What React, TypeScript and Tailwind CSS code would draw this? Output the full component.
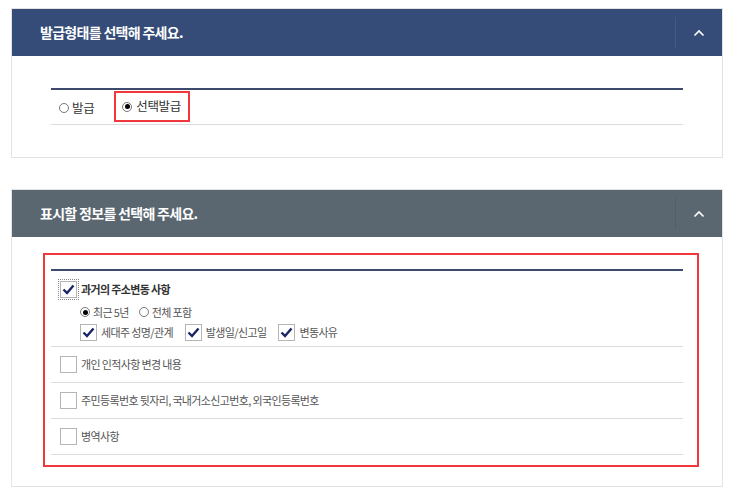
import React from 'react';

const font = { fontFamily: '"Noto Sans CJK KR", "Noto Sans", sans-serif' };

const Chevron: React.FC = () => (
  <svg width="12" height="8" viewBox="0 0 12 8" fill="none">
    <polyline points="1.5,6.5 6,2 10.5,6.5" stroke="white" strokeWidth="1.6" />
  </svg>
);

const Radio: React.FC<{ checked?: boolean }> = ({ checked }) => (
  <span className="w-[10px] h-[10px] rounded-full border border-[#777] bg-white flex items-center justify-center shrink-0">
    {checked && <span className="w-[5px] h-[5px] rounded-full bg-black" />}
  </span>
);

const Checkbox: React.FC<{ checked?: boolean; focused?: boolean }> = ({ checked, focused }) => (
  <span
    className={
      'w-[17px] h-[17px] border border-[#b5b5b5] bg-white flex items-center justify-center shrink-0 ' +
      (focused ? 'outline-1 outline-dotted outline-[#888] outline-offset-1' : '')
    }
  >
    {checked && (
      <svg width="13" height="11" viewBox="0 0 13 11" fill="none">
        <polyline points="1.5,5.5 5,9 11.5,1.5" stroke="#1b2566" strokeWidth="2.4" />
      </svg>
    )}
  </span>
);

const PanelHeader: React.FC<{ title: string; color: string; divider: string }> = ({ title, color, divider }) => (
  <div className={'h-[47px] flex items-center justify-between ' + color}>
    <h2 className="pl-[28px] text-white text-[14px] font-bold tracking-[-0.05em]">{title}</h2>
    <div className="flex items-center h-full">
      <span className={'w-px h-[31px] ' + divider} />
      <button className="w-[46px] h-full flex items-center justify-center">
        <Chevron />
      </button>
    </div>
  </div>
);

const rows = ['개인 인적사항 변경 내용', '주민등록번호 뒷자리, 국내거소신고번호, 외국인등록번호', '병역사항'];

export default function App() {
  return (
    <div className="bg-white min-h-screen pt-[8px] pl-[11px]" style={font}>
      <div className="w-[712px] border border-[#e3e3e3]">
        <PanelHeader title="발급형태를 선택해 주세요." color="bg-[#344c77]" divider="bg-[#45598a]" />
        <div className="px-[39px] pt-[32px] pb-[32px]">
          <div className="border-t-2 border-[#3d4a6c] border-b border-b-[#dcdcdc] h-[37px] flex items-start text-[12.5px] text-[#333] tracking-[-0.03em]">
            <label className="flex items-center gap-[3px] pl-[8px] mt-[9px]">
              <Radio />
              <span>발급</span>
            </label>
            <label className="ml-[20px] mt-[1px] h-[31px] w-[76px] pl-[6px] border-2 border-[#f0383d] flex items-center gap-[4px]">
              <Radio checked />
              <span>선택발급</span>
            </label>
          </div>
        </div>
      </div>

      <div className="w-[712px] border border-[#e3e3e3] mt-[31px]">
        <PanelHeader title="표시할 정보를 선택해 주세요." color="bg-[#5a6670]" divider="bg-[#4e5e72]" />
        <div className="pl-[31px] pr-[23px] pt-[16px] pb-[19px]">
          <div className="border-2 border-[#f0383d] pl-[6px] pr-[14px] pt-[14px] pb-[10px]">
            <div className="border-t-2 border-[#3d4a6c] text-[#555] tracking-[-0.04em]">
              <div className="border-b border-[#dcdcdc] pl-[9px] pt-[10px] pb-[5px]">
                <label className="flex items-center gap-[4px]">
                  <Checkbox checked focused />
                  <span className="text-[11px] font-bold text-[#333]">과거의 주소변동 사항</span>
                </label>
                <div className="pl-[20px] mt-[6px] flex items-center text-[11px]">
                  <label className="flex items-center gap-[3px]">
                    <Radio checked />
                    <span>최근 5년</span>
                  </label>
                  <label className="flex items-center gap-[3px] ml-[10px]">
                    <Radio />
                    <span>전체 포함</span>
                  </label>
                </div>
                <div className="pl-[20px] mt-[3px] flex items-center text-[11px]">
                  <label className="flex items-center gap-[4px]">
                    <Checkbox checked />
                    <span>세대주 성명/관계</span>
                  </label>
                  <label className="flex items-center gap-[4px] ml-[12px]">
                    <Checkbox checked />
                    <span>발생일/신고일</span>
                  </label>
                  <label className="flex items-center gap-[4px] ml-[12px]">
                    <Checkbox checked />
                    <span>변동사유</span>
                  </label>
                </div>
              </div>
              {rows.map((r) => (
                <div key={r} className="border-b border-[#dcdcdc] h-[36px] pl-[9px] flex items-center">
                  <label className="flex items-center gap-[4px] text-[11px]">
                    <Checkbox />
                    <span>{r}</span>
                  </label>
                </div>
              ))}
            </div>
          </div>
        </div>
      </div>
    </div>
  );
}
